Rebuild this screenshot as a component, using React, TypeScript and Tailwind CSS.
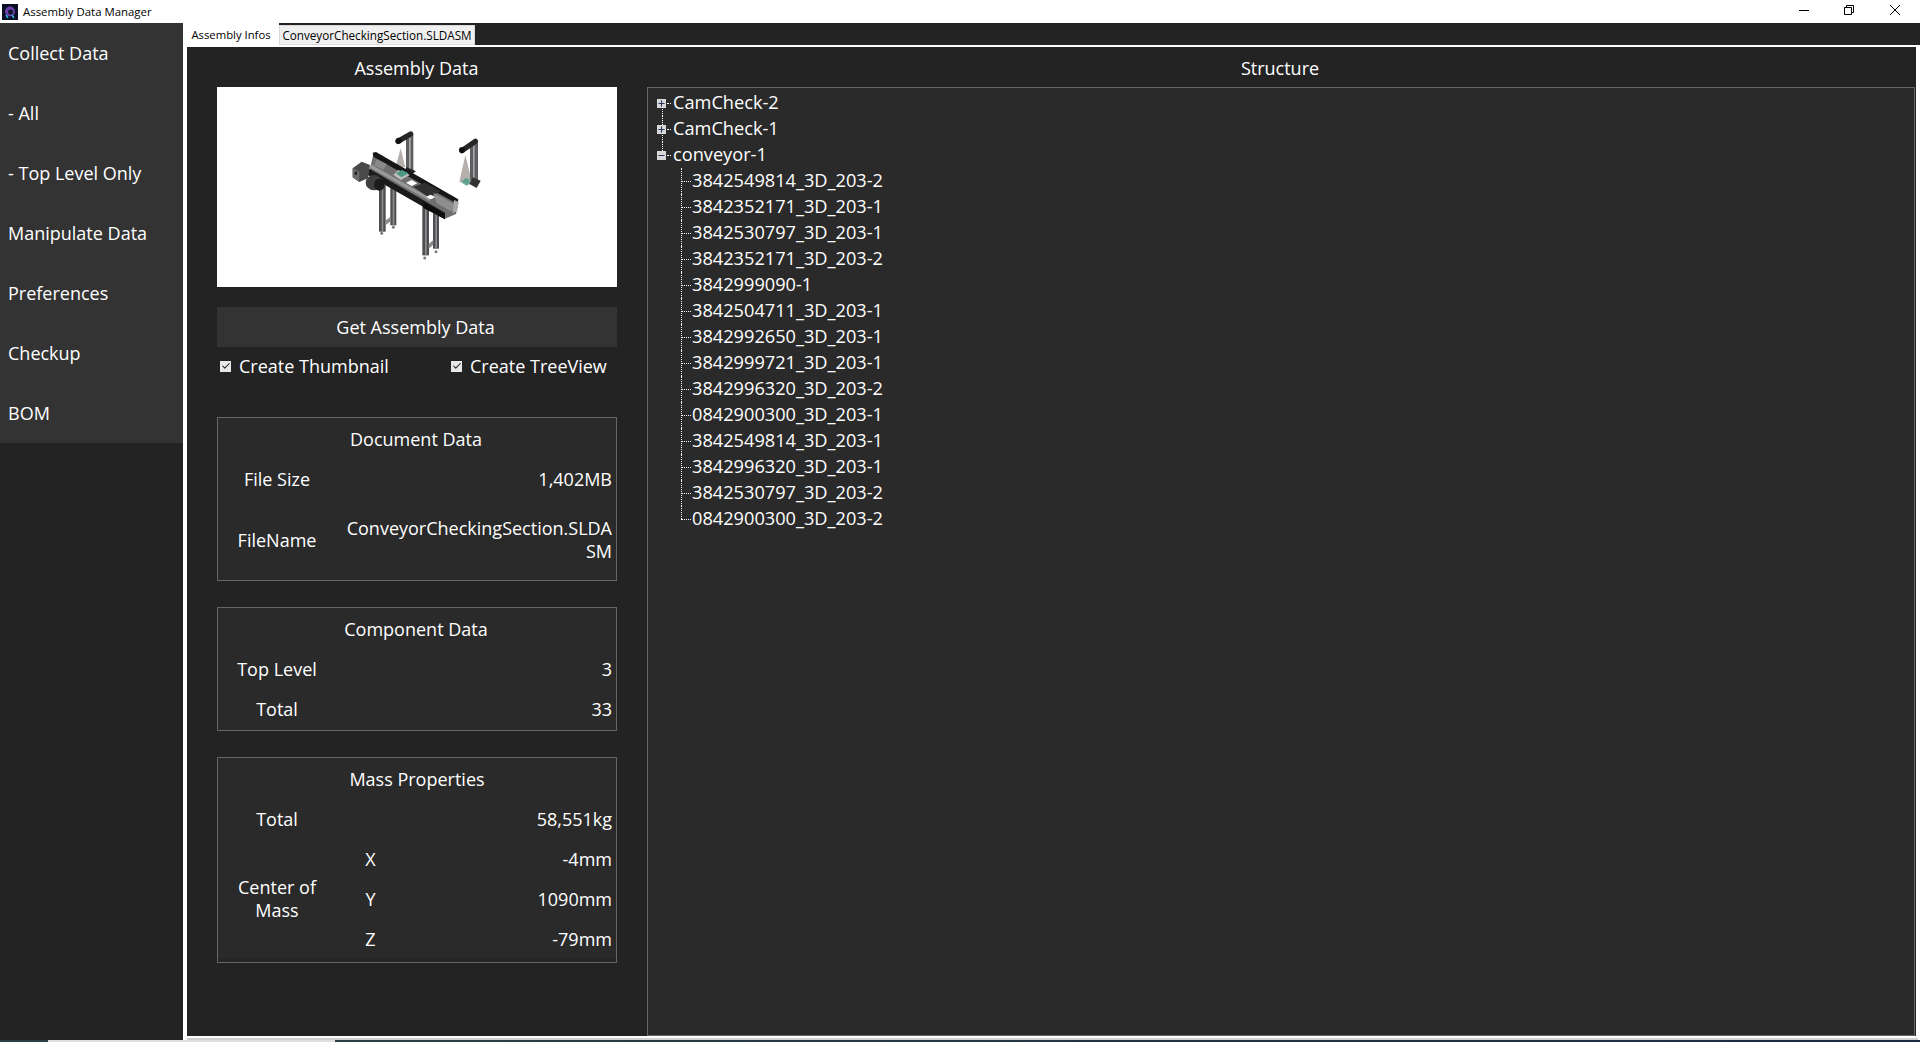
import { Check, Plus, Minus } from 'lucide-react';

const navItems = ['Collect Data', '- All', '- Top Level Only', 'Manipulate Data', 'Preferences', 'Checkup', 'BOM'];

const children = [
  '3842549814_3D_203-2',
  '3842352171_3D_203-1',
  '3842530797_3D_203-1',
  '3842352171_3D_203-2',
  '3842999090-1',
  '3842504711_3D_203-1',
  '3842992650_3D_203-1',
  '3842999721_3D_203-1',
  '3842996320_3D_203-2',
  '0842900300_3D_203-1',
  '3842549814_3D_203-1',
  '3842996320_3D_203-1',
  '3842530797_3D_203-2',
  '0842900300_3D_203-2',
];

function Thumbnail() {
  return (
    <svg viewBox="-339 -99 1200 600" className="h-full w-full blur-[0.5px]">
      {/* second camera stand */}
      <polygon points="406,105 388,186 425,182" fill="#b5b0ac" />
      <polygon points="392,186 410,174 428,186 410,197" fill="#6fa897" />
      <rect x="420" y="68" width="24" height="112" fill="#5e5e62" />
      <rect x="429" y="68" width="5" height="112" fill="#a8a8a8" />
      <path d="M396 92L436 64" stroke="#252525" strokeWidth="16" strokeLinecap="round" />
      <circle cx="396" cy="90" r="9" fill="#111" />
      <polygon points="428,172 452,182 440,204 418,192" fill="#333" />
      <polygon points="398,182 408,174 418,182 408,190" fill="#55a08c" />

      {/* first camera stand */}
      <polygon points="212,85 197,140 226,142" fill="#b5b0ac" />
      <rect x="228" y="46" width="22" height="108" fill="#5e5e62" />
      <rect x="237" y="46" width="5" height="108" fill="#a8a8a8" />
      <path d="M204 64L242 42" stroke="#252525" strokeWidth="16" strokeLinecap="round" />
      <circle cx="206" cy="62" r="9" fill="#111" />
      <polygon points="230,142 258,154 240,166 222,154" fill="#1f1f1f" />

      {/* legs */}
      <rect x="147" y="195" width="20" height="140" fill="#4e4e52" />
      <rect x="155" y="195" width="5" height="140" fill="#8c8c8c" />
      <rect x="181" y="188" width="18" height="128" fill="#4e4e52" />
      <rect x="188" y="188" width="5" height="128" fill="#8c8c8c" />
      <polygon points="166,302 182,290 182,304 166,316" fill="#8a8a8a" />
      <circle cx="155" cy="340" r="4.5" fill="#7a7a7a" />
      <circle cx="190" cy="322" r="4.5" fill="#7a7a7a" />
      <rect x="277" y="250" width="20" height="156" fill="#4e4e52" />
      <rect x="285" y="250" width="5" height="156" fill="#8c8c8c" />
      <rect x="309" y="280" width="18" height="106" fill="#4e4e52" />
      <rect x="316" y="280" width="5" height="106" fill="#8c8c8c" />
      <polygon points="296,372 310,360 310,374 296,386" fill="#8a8a8a" />
      <circle cx="284" cy="414" r="4.5" fill="#7a7a7a" />
      <circle cx="318" cy="395" r="4.5" fill="#7a7a7a" />

      {/* conveyor beam */}
      <polygon points="128,112 135,100 385,244 378,282 345,296 115,165" fill="#6f6f6f" />
      <polygon points="128,98 138,96 385,238 382,252 130,110" fill="#161616" />
      <polygon points="118,146 345,278 345,298 112,164" fill="#1b1b1b" />
      <polygon points="125,134 300,234 300,244 122,144" fill="#9a9a9a" />
      <polygon points="280,246 345,282 345,298 280,264" fill="#0c0c0c" />
      <polygon points="205,150 240,165 212,180 190,165" fill="#bdbdbd" />
      <polygon points="198,160 216,150 236,160 214,172" fill="#4d9a84" />
      <polygon points="228,188 245,180 262,190 245,198" fill="#ffffff" />
      <polygon points="250,200 285,188 332,214 296,232" fill="#303030" />
      <polygon points="288,230 302,224 316,232 302,238" fill="#ffffff" />
      <polygon points="140,118 170,132 160,150 132,135" fill="#8a8a8a" />
      <polygon points="310,218 372,252 366,275 320,250" fill="#8e8e8e" />
      <polygon points="372,240 386,246 382,272 368,280" fill="#aaaaaa" />

      {/* drive */}
      <polygon points="68,145 95,125 120,135 114,175 88,186 68,172" fill="#4a4a4a" />
      <polygon points="68,145 88,155 88,186 68,172" fill="#6c6c6c" />
      <rect x="74" y="155" width="7" height="10" fill="#222" />
      <ellipse cx="132" cy="188" rx="25" ry="23" fill="#3e3e3e" />
      <ellipse cx="148" cy="194" rx="16" ry="18" fill="#1c1c1c" />
    </svg>
  );
}

function CheckOption({ label }: { label: string }) {
  return (
    <div className="flex items-center">
      <span className="flex h-[11px] w-[11px] items-center justify-center bg-[#e8e8e8]">
        <Check size={10} strokeWidth={2.5} className="text-[#222]" />
      </span>
      <span className="ml-2 text-[#fff]">{label}</span>
    </div>
  );
}

function Row({ label, value }: { label: string; value: string }) {
  return (
    <div className="flex h-10 items-center">
      <div className="w-[118px] text-center">{label}</div>
      <div className="flex-1 pr-1 text-right">{value}</div>
    </div>
  );
}

function Expander({ open }: { open?: boolean }) {
  const Icon = open ? Minus : Plus;
  return (
    <span className="flex h-[9px] w-[9px] items-center justify-center bg-[#d8d8d8]">
      <Icon size={9} strokeWidth={3} className="text-[#2d3a66]" />
    </span>
  );
}

function RootNode({ label, open, top, bottom }: { label: string; open?: boolean; top?: boolean; bottom?: boolean }) {
  return (
    <div className="relative flex h-[26px] items-center pl-[9px]">
      {top && <span className="absolute bottom-0 left-[14px] h-[9px] border-l border-dotted border-white" />}
      {bottom && <span className="absolute top-0 left-[14px] h-[9px] border-l border-dotted border-white" />}
      <Expander open={open} />
      <span className="ml-[1px] w-[4px] border-t border-dotted border-white" />
      <span className="ml-[2px]">{label}</span>
    </div>
  );
}

function ChildNode({ label, last }: { label: string; last: boolean }) {
  return (
    <div className="relative flex h-[26px] items-center pl-[33px]">
      <span className={`absolute top-0 left-[33px] border-l border-dotted border-white ${last ? 'h-[13px]' : 'h-full'}`} />
      <span className="w-[10px] border-t border-dotted border-white" />
      <span className="ml-[1px]">{label}</span>
    </div>
  );
}

export default function App() {
  return (
    <div className="flex h-[1042px] w-[1920px] flex-col overflow-hidden bg-[#f0f0f0] font-['Open_Sans',sans-serif] text-[18px] text-white">
      <header className="flex h-[23px] items-center bg-white pl-[2px] text-black">
        <svg viewBox="0 0 16 16" className="h-4 w-4">
          <rect width="16" height="16" fill="#0b0f24" />
          <circle cx="8" cy="7.5" r="5" fill="#6a3fa8" />
          <circle cx="8.5" cy="8" r="2.5" fill="#10162e" />
          <path d="M4 11l2 3M10 11l2 3" stroke="#2fb4e6" strokeWidth="1.5" />
        </svg>
        <span className="ml-[5px] text-[11.4px]">Assembly Data Manager</span>
        <div className="mb-[3px] ml-auto flex items-center">
          <svg viewBox="0 0 10 10" className="mr-[35px] h-[10px] w-[10px]">
            <path d="M0 5.5h10" stroke="#000" fill="none" />
          </svg>
          <svg viewBox="0 0 10 10" className="mr-[36px] h-[10px] w-[10px]">
            <path d="M.5 2.5h7v7h-7zM2.5 2.5v-2h7v7h-2" stroke="#000" fill="none" />
          </svg>
          <svg viewBox="0 0 10 10" className="mr-[20px] h-[10px] w-[10px]">
            <path d="M0 0l10 10M10 0l-10 10" stroke="#000" fill="none" />
          </svg>
        </div>
      </header>

      <div className="flex min-h-0 flex-1">
        <aside className="flex h-[1017px] w-[183px] flex-col bg-[#232323]">
          <nav className="bg-[#333333]">
            {navItems.map((item) => (
              <div key={item} className="flex h-[60px] items-center pl-2">
                {item}
              </div>
            ))}
          </nav>
        </aside>

        <div className="flex min-w-0 flex-1 flex-col bg-white pl-[4px]">
          <div className="-ml-[4px] flex h-[22px] items-end bg-[#232323]">
            <div className="flex h-[24px] w-[96px] items-center justify-center self-start bg-white text-[11.3px] text-black">Assembly Infos</div>
            <div className="flex h-[20px] w-[196px] items-center justify-center border border-[#d9d9d9] bg-[#f0f0f0] pt-px text-[11.7px] text-black">ConveyorCheckingSection.SLDASM</div>
          </div>
          <main className="mt-[2px] mr-[4px] flex h-[989px] bg-[#232323]">
            <section className="ml-[30px] flex w-[400px] flex-col">
              <h2 className="flex h-10 items-center justify-center pt-[2px] pr-[1px]">Assembly Data</h2>
              <div className="h-[200px] bg-white">
                <Thumbnail />
              </div>
              <button className="mt-5 h-10 bg-[#333333] pr-[3px] text-white">Get Assembly Data</button>
              <div className="flex h-[38px] items-center pl-[3px]">
                <div className="w-[231px]">
                  <CheckOption label="Create Thumbnail" />
                </div>
                <CheckOption label="Create TreeView" />
              </div>
              <div className="mt-[32px] h-[164px] border border-[#666666] bg-[#2a2a2a]">
                <div className="flex h-[41px] items-center justify-center pt-px pr-[2px]">Document Data</div>
                <Row label="File Size" value="1,402MB" />
                <div className="flex h-[82px] items-center">
                  <div className="w-[118px] text-center">FileName</div>
                  <div className="flex-1 pr-1 text-right leading-[23px]">
                    ConveyorCheckingSection.SLDA
                    <br />
                    SM
                  </div>
                </div>
              </div>
              <div className="mt-[26px] h-[124px] border border-[#666666] bg-[#2a2a2a]">
                <div className="flex h-[41px] items-center justify-center pt-px pr-[2px]">Component Data</div>
                <Row label="Top Level" value="3" />
                <Row label="Total" value="33" />
              </div>
              <div className="mt-[26px] h-[206px] border border-[#666666] bg-[#252525]">
                <div className="h-[200px] bg-[#2a2a2a]">
                  <div className="flex h-[41px] items-center justify-center pt-px">Mass Properties</div>
                  <Row label="Total" value="58,551kg" />
                  <div className="flex h-[120px]">
                    <div className="flex w-[118px] items-center justify-center text-center leading-[23px]">
                      Center of
                      <br />
                      Mass
                    </div>
                    <div className="flex-1">
                      {[
                        ['X', '-4mm'],
                        ['Y', '1090mm'],
                        ['Z', '-79mm'],
                      ].map(([axis, value]) => (
                        <div key={axis} className="flex h-10 items-center">
                          <div className="ml-[2px] w-[65px] text-center">{axis}</div>
                          <div className="flex-1 pr-1 text-right">{value}</div>
                        </div>
                      ))}
                    </div>
                  </div>
                </div>
              </div>
            </section>

            <section className="ml-[30px] flex min-w-0 flex-1 flex-col pr-[1px]">
              <h2 className="flex h-10 items-center justify-center pt-[2px] pr-[2px]">Structure</h2>
              <div className="flex-1 border border-[#666666] bg-[#2a2a2a] pt-[2px] text-[18.2px]">
                <RootNode label="CamCheck-2" top />
                <RootNode label="CamCheck-1" top bottom />
                <RootNode label="conveyor-1" open bottom />
                {children.map((c, i) => (
                  <ChildNode key={c} label={c} last={i === children.length - 1} />
                ))}
              </div>
            </section>
          </main>
          <div className="mt-[2px] mr-[2px] h-[2px] bg-[#d0d0d0]" />
        </div>
      </div>
      <div className="flex h-[2px] shrink-0">
        <div className="w-[48px] bg-[#2a3f44]" />
        <div className="w-[287px] bg-[#e0e0e0]" />
        <div className="flex-1 bg-linear-to-r from-[#2a3f44] to-[#1c2a44]" />
      </div>
    </div>
  );
}
